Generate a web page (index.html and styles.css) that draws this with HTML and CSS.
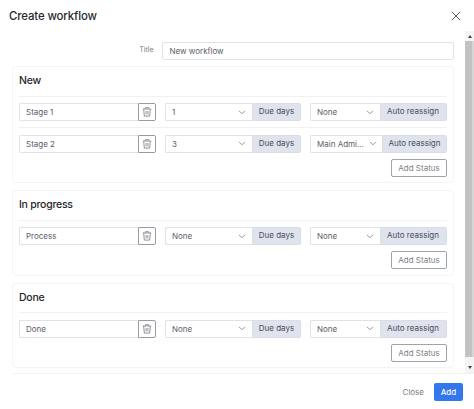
FILE: index.html
```html
<!DOCTYPE html>
<html lang="en">
<head>
<meta charset="utf-8">
<title>Create workflow</title>
<link rel="stylesheet" href="styles.css">
</head>
<body>
<svg class="defs" aria-hidden="true">
  <symbol id="trash" viewBox="0 0 10 10"><path d="M.8 2h8.4M3.3 1.9V.7h3.4v1.2M1.7 2.1l.6 7h5.4l.6-7M4.1 4v3.5M5.9 4v3.5"/></symbol>
  <symbol id="chevron" viewBox="0 0 8 5"><path d="M1 .8l3 3 3-3"/></symbol>
</svg>
<div class="modal">
  <header class="header">
    <h1>Create workflow</h1>
    <svg class="close" viewBox="0 0 10 10"><path d="M.8.8l8.4 8.4M9.2.8L.8 9.2"/></svg>
  </header>
  <div class="body">
    <main class="content">
      <div class="title-row"><label>Title</label><div class="title-input">New workflow</div></div>

      <section class="card">
        <h2>New</h2>
        <div class="row">
          <div class="group name"><span class="field">Stage 1</span><span class="trash"><svg><use href="#trash"/></svg></span></div>
          <div class="group due"><span class="field">1<svg class="chev"><use href="#chevron"/></svg></span><span class="addon">Due days</span></div>
          <div class="group assign"><span class="field">None<svg class="chev"><use href="#chevron"/></svg></span><span class="addon">Auto reassign</span></div>
        </div>
        <div class="row">
          <div class="group name"><span class="field">Stage 2</span><span class="trash"><svg><use href="#trash"/></svg></span></div>
          <div class="group due"><span class="field">3<svg class="chev"><use href="#chevron"/></svg></span><span class="addon">Due days</span></div>
          <div class="group assign long"><span class="field">Main Admi...<svg class="chev"><use href="#chevron"/></svg></span><span class="addon">Auto reassign</span></div>
        </div>
        <div class="add-status">Add Status</div>
      </section>

      <section class="card">
        <h2>In progress</h2>
        <div class="row">
          <div class="group name"><span class="field">Process</span><span class="trash"><svg><use href="#trash"/></svg></span></div>
          <div class="group due"><span class="field">None<svg class="chev"><use href="#chevron"/></svg></span><span class="addon">Due days</span></div>
          <div class="group assign"><span class="field">None<svg class="chev"><use href="#chevron"/></svg></span><span class="addon">Auto reassign</span></div>
        </div>
        <div class="add-status">Add Status</div>
      </section>

      <section class="card">
        <h2>Done</h2>
        <div class="row">
          <div class="group name"><span class="field">Done</span><span class="trash"><svg><use href="#trash"/></svg></span></div>
          <div class="group due"><span class="field">None<svg class="chev"><use href="#chevron"/></svg></span><span class="addon">Due days</span></div>
          <div class="group assign"><span class="field">None<svg class="chev"><use href="#chevron"/></svg></span><span class="addon">Auto reassign</span></div>
        </div>
        <div class="add-status">Add Status</div>
      </section>
    </main>
    <div class="scrollbar">
      <span class="arrow"><svg viewBox="0 0 4 3"><path d="M0 3l2-3 2 3z"/></svg></span>
      <span class="thumb"></span>
      <span class="arrow down"><svg viewBox="0 0 4 3"><path d="M0 0l2 3 2-3z"/></svg></span>
    </div>
  </div>
  <footer class="footer"><span class="close-btn">Close</span><span class="add-btn">Add</span></footer>
</div>
</body>
</html>
```

FILE: styles.css
```css
* { box-sizing: border-box; }
body { margin: 0; background: #fff; font-family: Inter, "Liberation Sans", sans-serif; font-size: 8px; color: #5c6066; overflow: hidden; }
h1, h2 { margin: 0; font-weight: 550; color: #26282c; white-space: nowrap; }
svg { fill: none; stroke: #777b82; stroke-width: .8; }
.defs { position: absolute; width: 0; height: 0; }
.modal { width: 474px; height: 409px; display: flex; flex-direction: column; }
.header { height: 31px; padding: 1px 13px 0 9px; display: flex; align-items: center; justify-content: space-between; }
h1 { font-size: 11.4px; letter-spacing: -.12px; }
.close { width: 10px; height: 10px; stroke: #44474b; stroke-width: .9; }
.body { height: 342px; display: flex; justify-content: space-between; }
.content { width: 442px; margin-left: 12px; padding-top: 10.5px; }
.title-row { display: flex; align-items: center; justify-content: flex-end; margin-bottom: 6.5px; }
.title-row label { font-size: 7px; margin: -2px 8.5px 0 0; color: #777b80; }
.title-input { width: 292px; height: 18px; border: 1px solid #dfe2e7; border-radius: 2px; padding-left: 6.5px; line-height: 16px; }
.card { border: 1px solid #f3f4f5; border-radius: 4px; padding: 0 6px 5.5px; margin-bottom: 7px; }
h2 { font-size: 10.5px; letter-spacing: -.25px; height: 28.5px; line-height: 27px; }
.row { display: flex; gap: 9px; padding: 6.5px 0; border-top: 1px solid #f0f1f3; height: 31.5px; }
.group { display: flex; height: 18px; white-space: nowrap; }
.name { width: 137px; }
.due { width: 136px; }
.assign { width: 137px; }
.field { flex: 1; display: flex; align-items: center; justify-content: space-between; border: 1px solid #dfe2e6; border-right: 0; border-radius: 2px 0 0 2px; padding: 0 6px 0 6px; }
.trash { width: 18px; display: flex; align-items: center; justify-content: center; border: 1px solid #999da3; border-radius: 0 2px 2px 0; }
.trash svg { width: 10px; height: 10px; }
.chev { width: 8px; height: 5px; flex: none; }
.addon { width: 49px; background: #dfe3ed; border: 1px solid #d9dde5; border-radius: 0 2px 2px 0; line-height: 15px; text-align: center; color: #484c55; }
.assign .addon { width: 67px; padding-right: 1px; }
.assign.long .addon { width: 65px; padding-right: 0; }
.long .field { padding-right: 5px; }
.add-status { width: 56px; height: 18px; margin-left: auto; border: 1px solid #a0a3a7; border-radius: 2px; line-height: 16px; text-align: center; color: #7c8086; white-space: nowrap; }
.scrollbar { width: 9px; display: flex; flex-direction: column; background: #f4f4f4; }
.arrow { height: 10px; display: flex; align-items: center; justify-content: center; }
.arrow svg { width: 4px; height: 3px; fill: #444; stroke: none; }
.arrow.down { height: 16px; padding-top: 5px; }
.thumb { flex: 1; background: #c1c1c1; border-right: 2px solid #d6d6d6; }
.footer { height: 36px; border-top: 1px solid #f2f2f3; margin-left: 12px; padding-right: 11px; display: flex; align-items: center; justify-content: flex-end; gap: 10px; }
.close-btn { color: #777b80; }
.add-btn { width: 29px; height: 18px; background: #3377ee; color: #fff; border-radius: 2px; text-align: center; line-height: 18px; font-weight: 500; }
```
